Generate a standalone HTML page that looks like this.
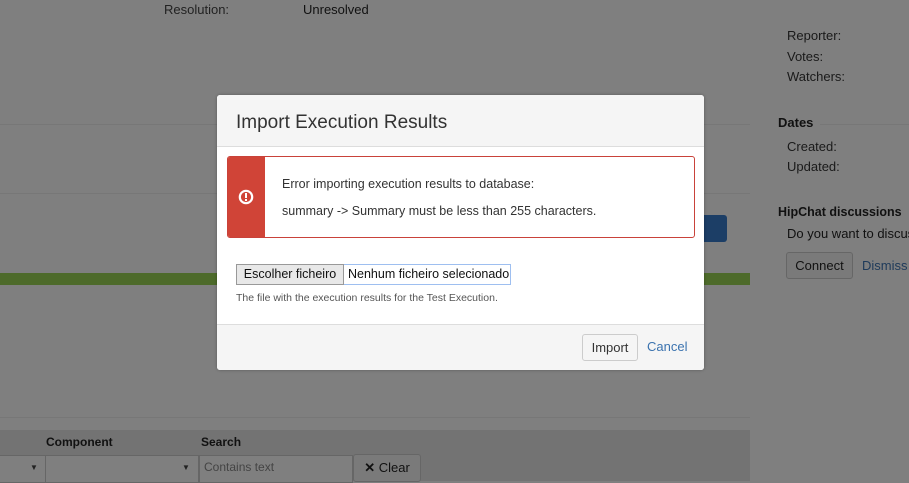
<!DOCTYPE html>
<html><head><meta charset="utf-8"><style>
body{margin:0;width:909px;height:481px;overflow:hidden;background:#7f7f7f;font-family:"Liberation Sans",Arial,sans-serif;position:relative;color:#1a1a1a}
.a{position:absolute;white-space:nowrap}
.f13{font-size:13px}
.line{position:absolute;height:1px;background:#777}
.modal{position:absolute;left:217px;top:95px;width:487px;height:275px;background:#fff;border-radius:3px;box-shadow:0 0 3px rgba(0,0,0,.3);overflow:hidden}
</style></head><body>
<div class="a f13" style="left:164px;top:2px;color:#222">Resolution:</div>
<div class="a f13" style="left:303px;top:2px;color:#111">Unresolved</div>
<div class="a f13" style="left:787px;top:28px">Reporter:</div>
<div class="a f13" style="left:787px;top:49px">Votes:</div>
<div class="a f13" style="left:787px;top:69px">Watchers:</div>
<div class="a f13" style="left:778px;top:115px;font-weight:bold;color:#111">Dates</div>
<div class="line" style="left:820px;top:124px;width:89px"></div>
<div class="a f13" style="left:787px;top:139px">Created:</div>
<div class="a f13" style="left:787px;top:159px">Updated:</div>
<div class="a f13" style="left:778px;top:205px;font-weight:bold;color:#111;font-size:12.5px">HipChat discussions</div>
<div class="a f13" style="left:787px;top:226px;color:#111">Do you want to discuss</div>
<div class="a f13" style="left:786px;top:252px;width:65px;height:25px;border:1px solid #666;background:#7a7a7a;border-radius:3px;text-align:center;line-height:25px;color:#111">Connect</div>
<div class="a f13" style="left:862px;top:258px;color:#1e3a5a">Dismiss</div>
<div class="line" style="left:0;top:124px;width:750px"></div>
<div class="line" style="left:0;top:193px;width:750px"></div>
<div class="a" style="left:704px;top:215px;width:23px;height:27px;background:#1c3e66;border-radius:0 3px 3px 0"></div>
<div class="a" style="left:0;top:273px;width:750px;height:12px;background:#4d6a2a"></div>
<div class="line" style="left:0;top:417px;width:750px"></div>
<div class="a" style="left:0;top:430px;width:750px;height:51px;background:#737373"></div>
<div class="a" style="left:46px;top:435px;font-weight:bold;color:#111;font-size:12px">Component</div>
<div class="a" style="left:201px;top:435px;font-weight:bold;color:#111;font-size:12px">Search</div>
<div class="a" style="left:-1px;top:455px;width:45px;height:26px;border:1px solid #666;background:#7f7f7f"></div>
<div class="a" style="left:45px;top:455px;width:152px;height:26px;border:1px solid #666;background:#7f7f7f"></div>
<div class="a" style="left:30px;top:463px;font-size:8px;color:#222">▼</div>
<div class="a" style="left:182px;top:463px;font-size:8px;color:#222">▼</div>
<div class="a" style="left:199px;top:455px;width:152px;height:26px;border:1px solid #666;background:#7f7f7f"></div>
<div class="a" style="left:204px;top:460px;font-size:12px;color:#444">Contains text</div>
<div class="a f13" style="left:353px;top:454px;width:66px;height:26px;border:1px solid #666;border-radius:3px;background:#7a7a7a;line-height:26px;text-align:center;color:#111"><b>✕</b> Clear</div>
<div class="modal">
 <div style="height:51px;background:#f5f5f5;border-bottom:1px solid #ddd"></div>
 <div class="a" style="left:19px;top:17px;font-size:19px;color:#333">Import Execution Results</div>
 <div class="a" style="left:10px;top:61px;width:466px;height:80px;border:1px solid #c9423a;border-radius:3px;overflow:hidden">
  <div style="position:absolute;left:0;top:0;width:37px;height:80px;background:#d04437"></div>
  <svg style="position:absolute;left:10px;top:32px" width="16" height="16" viewBox="0 0 16 16"><circle cx="8" cy="8" r="6.2" fill="none" stroke="#fff" stroke-width="2.2"/><rect x="7" y="4" width="2" height="5" fill="#fff"/><rect x="7" y="10" width="2" height="2" fill="#fff"/></svg>
  <div class="a" style="left:54px;top:20px;color:#333;font-size:12.5px">Error importing execution results to database:</div>
  <div class="a" style="left:54px;top:47px;color:#333;font-size:12.5px">summary -&gt; Summary must be less than 255 characters.</div>
 </div>
 <div class="a" style="left:19px;top:169px;width:275px;height:21px;border:1px solid #9ebff0;box-sizing:border-box"></div>
 <div class="a" style="left:19px;top:169px;width:108px;height:21px;background:#e8e8e8;border:1px solid #999;box-sizing:border-box;line-height:19px;text-align:center;color:#111;font-size:12.5px">Escolher ficheiro</div>
 <div class="a" style="left:131px;top:172px;color:#111;width:162px;overflow:hidden;font-size:12.5px">Nenhum ficheiro selecionado</div>
 <div class="a" style="left:19px;top:197px;font-size:10.5px;color:#555">The file with the execution results for the Test Execution.</div>
 <div class="a" style="left:0;top:229px;width:487px;height:46px;background:#f5f5f5;border-top:1px solid #ddd"></div>
 <div class="a f13" style="left:365px;top:239px;width:54px;height:25px;border:1px solid #ccc;border-radius:3px;background:#f5f5f5;line-height:25px;text-align:center;color:#333">Import</div>
 <div class="a f13" style="left:430px;top:244px;color:#3b73af">Cancel</div>
</div>
</body></html>
